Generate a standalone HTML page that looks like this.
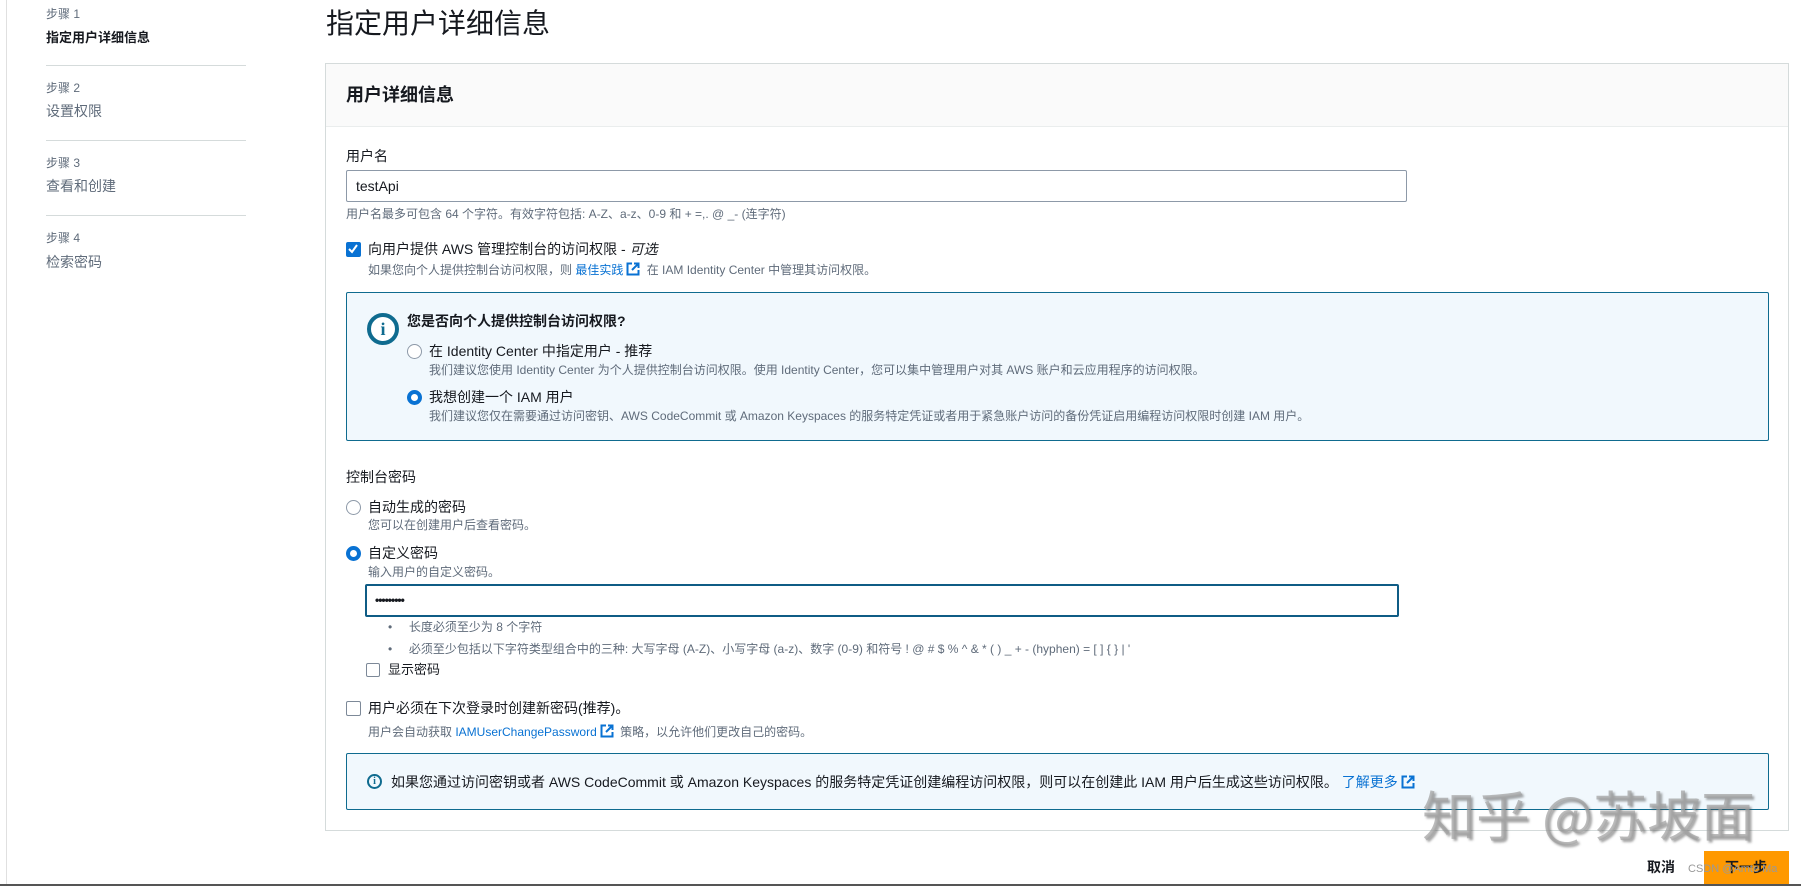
<!DOCTYPE html>
<html><head><meta charset="utf-8"><style>
*{margin:0;padding:0;box-sizing:border-box}
body{width:1801px;height:886px;position:relative;overflow:hidden;background:#fff;font-family:"Liberation Sans","Noto Sans CJK SC",sans-serif;color:#16191f}
.a{position:absolute;white-space:nowrap;line-height:1}
.s{font-size:13px;color:#5f6b7a}
.t{font-size:14px;color:#16191f}
.x{font-size:12px;color:#5f6b7a}
.hr{position:absolute;left:46px;width:200px;height:1px;background:#d5dbdb}
.rad{position:absolute;width:15px;height:15px;border-radius:50%;border:1.5px solid #8d99a8;background:#fff}
.rad.on{border:4.5px solid #0972d3}
.cb{position:absolute;width:15px;height:15px;border:1.5px solid #7d8998;border-radius:2px;background:#fff}
.lnk{color:#0972d3}
.ext{display:inline-block;width:14px;height:14px;vertical-align:-2px;margin:0 3px}
</style></head><body>
<svg width="0" height="0" style="position:absolute"><defs><symbol id="ex" viewBox="0 0 14 14"><path d="M6 1.5H1.5V12.5H12.5V8" stroke="#0972d3" stroke-width="2" fill="none"/><path d="M6 8L12.5 1.5M8 1.5H12.5V6" stroke="#0972d3" stroke-width="2" fill="none"/></symbol></defs></svg>
<div style="position:absolute;left:6px;top:0;width:1px;height:886px;background:#e0e0e0"></div>
<div class="a s" style="left:46px;top:8px;font-size:12px">步骤 1</div>
<div class="a t" style="left:46px;top:31px;font-weight:bold;font-size:13px">指定用户详细信息</div>
<div class="hr" style="top:65px"></div>
<div class="a s" style="left:46px;top:82px;font-size:12px">步骤 2</div>
<div class="a s" style="left:46px;top:104px;font-size:14px">设置权限</div>
<div class="hr" style="top:140px"></div>
<div class="a s" style="left:46px;top:157px;font-size:12px">步骤 3</div>
<div class="a s" style="left:46px;top:179px;font-size:14px">查看和创建</div>
<div class="hr" style="top:215px"></div>
<div class="a s" style="left:46px;top:232px;font-size:12px">步骤 4</div>
<div class="a s" style="left:46px;top:255px;font-size:14px">检索密码</div>

<div class="a" style="left:326px;top:10px;font-size:28px;color:#16191f">指定用户详细信息</div>

<div style="position:absolute;left:325px;top:63px;width:1464px;height:768px;border:1px solid #d5dbdb;background:#fff"></div>
<div style="position:absolute;left:326px;top:64px;width:1462px;height:63px;background:#fafafa;border-bottom:1px solid #eaeded"></div>
<div class="a" style="left:346px;top:86px;font-size:18px;font-weight:bold">用户详细信息</div>

<div class="a t" style="left:346px;top:149px">用户名</div>
<div style="position:absolute;left:346px;top:170px;width:1061px;height:32px;border:1px solid #8d99a8;border-radius:2px"></div>
<div class="a t" style="left:356px;top:179px">testApi</div>
<div class="a x" style="left:346px;top:208px">用户名最多可包含 64 个字符。有效字符包括: A-Z、a-z、0-9 和 + =,. @ _- (连字符)</div>

<div class="cb" style="left:346px;top:242px;background:#0972d3;border-color:#0972d3"><svg width="12" height="12" style="position:absolute;left:0;top:0"><path d="M2 6 L5 9 L10 2" stroke="#fff" stroke-width="2" fill="none"/></svg></div>
<div class="a t" style="left:368px;top:242px">向用户提供 AWS 管理控制台的访问权限 - <i>可选</i></div>
<div class="a x" style="left:368px;top:262px">如果您向个人提供控制台访问权限，则 <span class="lnk">最佳实践</span><svg class="ext"><use href="#ex"/></svg> 在 IAM Identity Center 中管理其访问权限。</div>

<div style="position:absolute;left:346px;top:292px;width:1423px;height:149px;border:1px solid #0f6b8f;background:#f1f8fd;border-radius:2px"></div>
<div style="position:absolute;left:367px;top:313px;width:32px;height:32px;border-radius:50%;border:4px solid #0f6b8f;background:#fff;text-align:center;font:bold 18px/24px 'Liberation Serif',serif;color:#0f6b8f">i</div>
<div class="a t" style="left:407px;top:314px;font-weight:bold">您是否向个人提供控制台访问权限?</div>
<div class="rad" style="left:407px;top:344px"></div>
<div class="a t" style="left:429px;top:344px">在 Identity Center 中指定用户 - 推荐</div>
<div class="a x" style="left:429px;top:364px">我们建议您使用 Identity Center 为个人提供控制台访问权限。使用 Identity Center，您可以集中管理用户对其 AWS 账户和云应用程序的访问权限。</div>
<div class="rad on" style="left:407px;top:390px"></div>
<div class="a t" style="left:429px;top:390px">我想创建一个 IAM 用户</div>
<div class="a x" style="left:429px;top:410px">我们建议您仅在需要通过访问密钥、AWS CodeCommit 或 Amazon Keyspaces 的服务特定凭证或者用于紧急账户访问的备份凭证启用编程访问权限时创建 IAM 用户。</div>

<div class="a t" style="left:346px;top:470px">控制台密码</div>
<div class="rad" style="left:346px;top:500px"></div>
<div class="a t" style="left:368px;top:500px">自动生成的密码</div>
<div class="a x" style="left:368px;top:519px">您可以在创建用户后查看密码。</div>
<div class="rad on" style="left:346px;top:546px"></div>
<div class="a t" style="left:368px;top:546px">自定义密码</div>
<div class="a x" style="left:368px;top:566px">输入用户的自定义密码。</div>
<div style="position:absolute;left:365px;top:584px;width:1034px;height:33px;border:2px solid #0f5c85;border-radius:2px"></div>
<div class="a" style="left:375px;top:594px;font-size:12px;font-weight:bold;letter-spacing:-1px">•••••••••</div>
<div class="a x" style="left:388px;top:621px">•&nbsp;&nbsp;&nbsp;&nbsp;&nbsp;长度必须至少为 8 个字符</div>
<div class="a x" style="left:388px;top:643px">•&nbsp;&nbsp;&nbsp;&nbsp;&nbsp;必须至少包括以下字符类型组合中的三种: 大写字母 (A-Z)、小写字母 (a-z)、数字 (0-9) 和符号 ! @ # $ % ^ &amp; * ( ) _ + - (hyphen) = [ ] { } | '</div>
<div class="cb" style="left:366px;top:663px;width:14px;height:14px"></div>
<div class="a t" style="left:388px;top:663px;font-size:13px">显示密码</div>
<div class="cb" style="left:346px;top:701px"></div>
<div class="a t" style="left:368px;top:701px">用户必须在下次登录时创建新密码(推荐)。</div>
<div class="a x" style="left:368px;top:724px">用户会自动获取 <span class="lnk">IAMUserChangePassword</span><svg class="ext"><use href="#ex"/></svg> 策略，以允许他们更改自己的密码。</div>

<div style="position:absolute;left:346px;top:753px;width:1423px;height:57px;border:1px solid #0f6b8f;background:#f1f8fd;border-radius:2px"></div>
<div style="position:absolute;left:367px;top:774px;width:15px;height:15px;border-radius:50%;border:2px solid #0f6b8f;text-align:center;font:bold 10px/11px 'Liberation Serif',serif;color:#0f6b8f">i</div>
<div class="a t" style="left:391px;top:775px">如果您通过访问密钥或者 AWS CodeCommit 或 Amazon Keyspaces 的服务特定凭证创建编程访问权限，则可以在创建此 IAM 用户后生成这些访问权限。 <span class="lnk">了解更多</span><svg class="ext"><use href="#ex"/></svg></div>

<div class="a" style="left:1422px;top:786px;font-size:54px;color:rgba(160,160,160,0.7);font-family:'Noto Sans CJK SC',sans-serif;text-shadow:2px 2px 2px rgba(80,80,80,.5)">知乎 @苏坡面</div>

<div class="a" style="left:1647px;top:860px;font-size:14px;font-weight:bold">取消</div>
<div style="position:absolute;left:1704px;top:851px;width:85px;height:35px;background:#ff9900"></div>
<div class="a" style="left:1725px;top:860px;font-size:14px;font-weight:bold">下一步</div>
<div class="a" style="left:1688px;top:864px;font-size:11px;color:#999">CSDN @Amte Ma</div>
<div style="position:absolute;left:0;top:884px;width:1801px;height:2px;background:#555"></div>
</body></html>
